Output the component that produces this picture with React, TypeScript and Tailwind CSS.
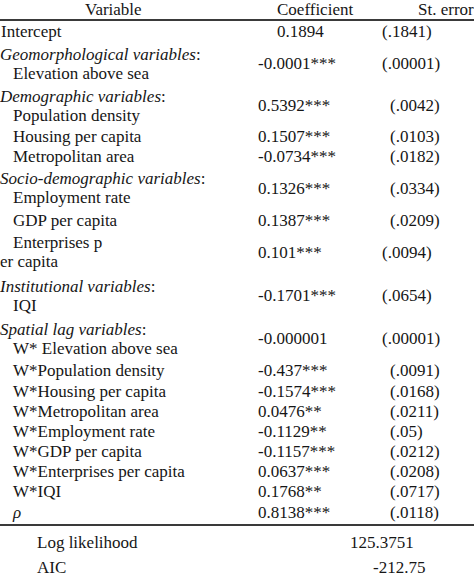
import React from "react";

type Row = {
  h: string;
  label: React.ReactNode;
  coef: string;
  coefPad?: string;
  se: string;
  sePad?: string;
};

const Ind = ({ children }: { children: React.ReactNode }) => (
  <span className="block pl-[13px]">{children}</span>
);
const Grp = ({ children }: { children: React.ReactNode }) => (
  <span className="block">
    <i>{children}</i>:
  </span>
);

const rows: Row[] = [
  { h: "h-[21px]", label: <span className="block pl-[1px]">Intercept</span>, coef: "0.1894", coefPad: "pl-[19px]", se: "(.1841)", sePad: "pl-0" },
  {
    h: "h-[43px]",
    label: (
      <>
        <Grp>Geomorphological variables</Grp>
        <Ind>Elevation above sea</Ind>
      </>
    ),
    coef: "-0.0001***",
    se: "(.00001)",
    sePad: "pl-0",
  },
  {
    h: "h-[41px]",
    label: (
      <>
        <Grp>Demographic variables</Grp>
        <Ind>Population density</Ind>
      </>
    ),
    coef: "0.5392***",
    se: "(.0042)",
  },
  { h: "h-[20px]", label: <Ind>Housing per capita</Ind>, coef: "0.1507***", se: "(.0103)" },
  { h: "h-[20px]", label: <Ind>Metropolitan area</Ind>, coef: "-0.0734***", se: "(.0182)" },
  {
    h: "h-[44px]",
    label: (
      <>
        <Grp>Socio-demographic variables</Grp>
        <Ind>Employment rate</Ind>
      </>
    ),
    coef: "0.1326***",
    se: "(.0334)",
  },
  { h: "h-[20px]", label: <Ind>GDP per capita</Ind>, coef: "0.1387***", se: "(.0209)" },
  {
    h: "h-[44px]",
    label: (
      <>
        <Ind>Enterprises p</Ind>
        <span className="block">er capita</span>
      </>
    ),
    coef: "0.101***",
    se: "(.0094)",
    sePad: "pl-0",
  },
  {
    h: "h-[43px]",
    label: (
      <>
        <Grp>Institutional variables</Grp>
        <Ind>IQI</Ind>
      </>
    ),
    coef: "-0.1701***",
    se: "(.0654)",
    sePad: "pl-0",
  },
  {
    h: "h-[43px]",
    label: (
      <>
        <Grp>Spatial lag variables</Grp>
        <Ind>W* Elevation above sea</Ind>
      </>
    ),
    coef: "-0.000001",
    se: "(.00001)",
    sePad: "pl-0",
  },
  { h: "h-[21px]", label: <Ind>W*Population density</Ind>, coef: "-0.437***", se: "(.0091)" },
  { h: "h-[20px]", label: <Ind>W*Housing per capita</Ind>, coef: "-0.1574***", se: "(.0168)" },
  { h: "h-[20px]", label: <Ind>W*Metropolitan area</Ind>, coef: "0.0476**", se: "(.0211)" },
  { h: "h-[20px]", label: <Ind>W*Employment rate</Ind>, coef: "-0.1129**", se: "(.05)" },
  { h: "h-[20px]", label: <Ind>W*GDP per capita</Ind>, coef: "-0.1157***", se: "(.0212)" },
  { h: "h-[20px]", label: <Ind>W*Enterprises per capita</Ind>, coef: "0.0637***", se: "(.0208)" },
  { h: "h-[20px]", label: <Ind>W*IQI</Ind>, coef: "0.1768**", se: "(.0717)" },
  { h: "h-[25px]", label: <Ind><i>ρ</i></Ind>, coef: "0.8138***", se: "(.0118)" },
];

export default function App() {
  return (
    <div className="w-[474px] h-[580px] overflow-hidden bg-white text-[#161616] [font-family:'Liberation_Serif',serif] text-[17px] leading-[19px]">
      <div className="grid grid-cols-[258px_124px_92px] h-[21px] items-center border-b-2 border-[#3a3a3a] whitespace-nowrap">
        <div className="pl-[85px]">Variable</div>
        <div className="pl-[19px]">Coefficient</div>
        <div className="pl-[36px]">St. error</div>
      </div>
      {rows.map((r, i) => (
        <div
          key={i}
          className={`grid grid-cols-[258px_124px_92px] items-center whitespace-nowrap ${r.h} ${
            i === rows.length - 1 ? "border-b-2 border-[#3a3a3a]" : ""
          }`}
        >
          <div>{r.label}</div>
          <div className={r.coefPad ?? "pl-0"}>{r.coef}</div>
          <div className={r.sePad ?? "pl-[8px]"}>{r.se}</div>
        </div>
      ))}
      <div className="grid grid-cols-[350px_124px] h-[32px] items-center whitespace-nowrap">
        <div className="pl-[37px]">Log likelihood</div>
        <div>125.3751</div>
      </div>
      <div className="grid grid-cols-[373px_101px] h-[18px] items-center whitespace-nowrap">
        <div className="pl-[37px]">AIC</div>
        <div>-212.75</div>
      </div>
    </div>
  );
}
